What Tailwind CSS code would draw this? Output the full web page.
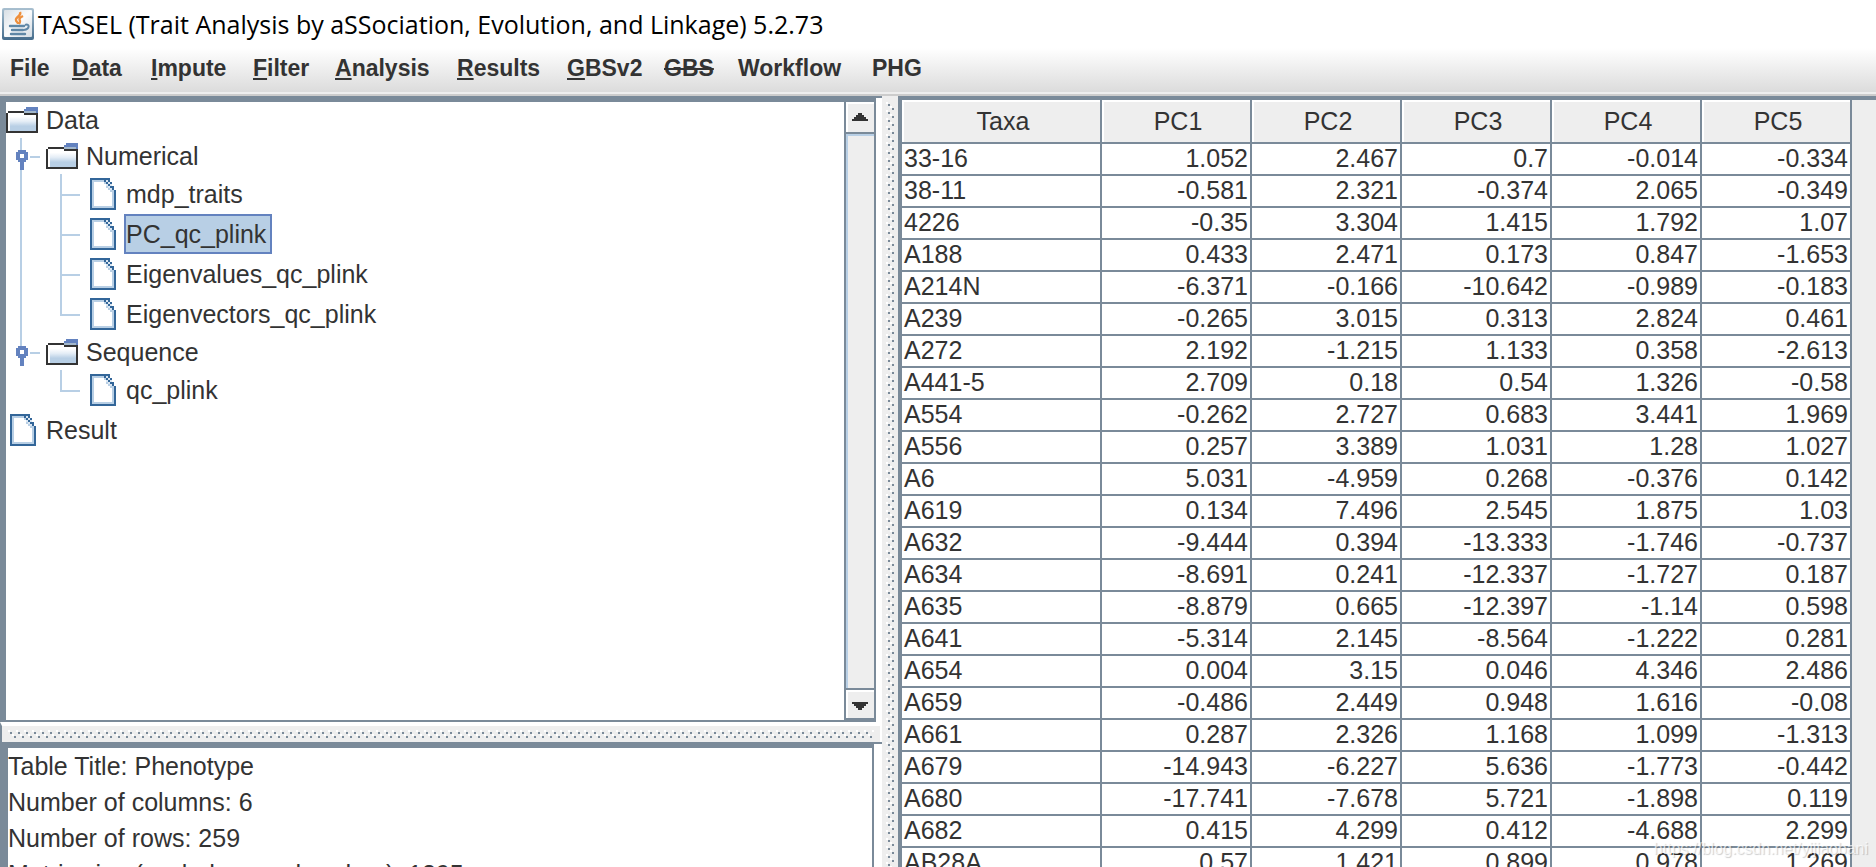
<!DOCTYPE html>
<html lang="en">
<head>
    <meta charset="UTF-8">
    <meta name="viewport" content="width=device-width, initial-scale=1.0">
    <title>TASSEL (Trait Analysis by aSSociation, Evolution, and Linkage) 5.2.73</title>
    <script src="https://cdn.jsdelivr.net/npm/@tailwindcss/browser@4"></script>
</head>
<body class="h-screen flex flex-col overflow-hidden bg-white font-['Liberation_Sans',Arial,sans-serif] text-[25px] leading-7 text-[#333333]">

    <!-- shared icons -->
    <svg class="absolute w-0 h-0" aria-hidden="true">
        <defs>
            <linearGradient id="folder-fill" x1="0" y1="0" x2="0" y2="1">
                <stop offset="0.1" stop-color="#ffffff"/>
                <stop offset="0.4" stop-color="#e4edf6"/>
                <stop offset="0.7" stop-color="#b8cfe5"/>
            </linearGradient>
        </defs>
        <symbol id="folder" viewBox="0 0 16 13" shape-rendering="crispEdges">
            <path d="M1 3h14v9H1z" fill="#fff"/>
            <path d="M2 4h13v8H2z" fill="url(#folder-fill)"/>
            <path d="M1 2h8v1H1zM0 3h1v9h14V4H9V3h7v10H0z" fill="#333"/>
            <path d="M10 0h6v2h-1v1h1v-1H9V1h1z" fill="#6382bf"/>
            <path d="M9 2h6v1H9z" fill="#a3b8cc"/>
        </symbol>
        <symbol id="file" viewBox="0 0 13 16" shape-rendering="crispEdges">
            <path d="M0 0h10v2h1v2h1v2h1v10H0z" fill="#336699"/>
            <path d="M1 1h6v1h1v2h1v1h1v1h2v9H1z" fill="#b8cfe5"/>
            <path d="M2 2h5v1h1v2h1v1h1v1h1v7H2z" fill="#fff"/>
            <path d="M8 1h1v1H8zM9 2h1v1H9zM8 3h1v1H8zM9 4h1v1H9zM10 3h1v1h-1zM10 5h1v1h-1z" fill="#dbe7f2"/>
        </symbol>
        <symbol id="handle" viewBox="0 0 6 10" shape-rendering="crispEdges">
            <path d="M1 0h4v1h1v4H5v1H4v4H2V6H1V5H0V1h1z" fill="#6382bf"/>
            <path d="M2 2h2v2H2z" fill="#fff"/>
        </symbol>
        <symbol id="arrow-up" viewBox="0 0 8 4" shape-rendering="crispEdges">
            <path d="M3 0h2v1h1v1h1v1h1v1H0V3h1V2h1V1h1z" fill="#333"/>
        </symbol>
        <symbol id="arrow-down" viewBox="0 0 8 4" shape-rendering="crispEdges">
            <path d="M0 0h8v1H7v1H6v1H5v1H3V3H2V2H1V1H0z" fill="#333"/>
        </symbol>
    </svg>

    <header class="flex h-12 shrink-0 items-center pl-0.5 gap-1 text-black">
        <svg class="w-8 h-8" viewBox="0 0 32 32" aria-hidden="true">
            <defs>
                <linearGradient id="java-bg" x1="0" y1="0" x2="0" y2="1">
                    <stop offset="0" stop-color="#a9c0d0"/>
                    <stop offset="1" stop-color="#456c8c"/>
                </linearGradient>
                <linearGradient id="java-in" x1="0" y1="0" x2="1" y2="1">
                    <stop offset="0" stop-color="#d8dfe5"/>
                    <stop offset="0.5" stop-color="#fafbfc"/>
                    <stop offset="1" stop-color="#d5dde4"/>
                </linearGradient>
            </defs>
            <rect width="32" height="32" rx="2" fill="url(#java-bg)"/>
            <rect x="2" y="2" width="28" height="27" rx="1" fill="url(#java-in)"/>
            <path d="M18 4c2 4-5 5-4 8 0 2 2 2 2 4M21 8c-4 2-4 3-3 5 0 1 0 2-1 3" fill="none" stroke="#ee8f3c" stroke-width="2.4"/>
            <path d="M8 18h14M10 22h11M9 26h14" fill="none" stroke="#5f87a6" stroke-width="2.4" stroke-linecap="round"/>
            <path d="M23 17c5-2 5 4-1 5" fill="none" stroke="#5f87a6" stroke-width="2"/>
        </svg>
        <h1 class="font-['Open_Sans',sans-serif] text-[25px] leading-8 whitespace-nowrap">TASSEL (Trait Analysis by aSSociation, Evolution, and Linkage) 5.2.73</h1>
    </header>

    <nav class="grid h-12 shrink-0 grid-cols-[62px_79px_102px_82px_122px_110px_97px_74px_134px_auto] content-start justify-start justify-items-start border-b-2 border-[#cccccc] bg-linear-to-b from-white to-[#dadada] pl-2.5 pt-1.5 text-[23px] font-bold shadow-[inset_0_-2px_0_#eeeeee]">
        <button>File</button>
        <button><span class="underline decoration-2 underline-offset-2">D</span>ata</button>
        <button><span class="underline decoration-2 underline-offset-2">I</span>mpute</button>
        <button><span class="underline decoration-2 underline-offset-2">F</span>ilter</button>
        <button><span class="underline decoration-2 underline-offset-2">A</span>nalysis</button>
        <button><span class="underline decoration-2 underline-offset-2">R</span>esults</button>
        <button><span class="underline decoration-2 underline-offset-2">G</span>BSv2</button>
        <button class="line-through decoration-2">GBS</button>
        <button>Workflow</button>
        <button>PHG</button>
    </nav>

    <main class="flex flex-1 min-h-0">
        <div class="flex flex-col w-[882px] shrink-0">

            <!-- data tree -->
            <section class="flex flex-1 min-h-0 border-l-6 border-t-6 border-[#7a8a99] bg-white">
                <div class="flex-1 border-b-2 border-[#7a8a99]">
                    <ul>
                        <li>
                            <div class="flex h-9 items-center gap-2"><svg class="w-8 h-[26px]"><use href="#folder"/></svg>Data</div>
                            <ul class="relative pl-10">
                                <li class="absolute left-3.5 top-0 h-[210px] w-0.5 bg-[#b8cfe5]" aria-hidden="true"></li>
                                <li class="relative">
                                    <div class="absolute -left-4 top-[18px] h-0.5 w-2.5 bg-[#b8cfe5]"></div>
                                    <svg class="absolute -left-[30px] top-3 w-3 h-5"><use href="#handle"/></svg>
                                    <div class="flex h-9 items-center gap-2"><svg class="w-8 h-[26px]"><use href="#folder"/></svg>Numerical</div>
                                    <ul class="relative pl-10">
                                        <li class="absolute left-3.5 top-0 h-[142px] w-0.5 bg-[#b8cfe5]" aria-hidden="true"></li>
                                        <li class="relative flex h-10 items-center gap-2 before:absolute before:-left-6 before:top-5 before:h-0.5 before:w-[18px] before:bg-[#b8cfe5]"><svg class="ml-1 mr-0.5 w-[26px] h-8"><use href="#file"/></svg>mdp_traits</li>
                                        <li class="relative flex h-10 items-center gap-1.5 before:absolute before:-left-6 before:top-5 before:h-0.5 before:w-[18px] before:bg-[#b8cfe5]"><svg class="ml-1 mr-0.5 w-[26px] h-8"><use href="#file"/></svg><span class="flex h-10 items-center border-2 border-[#6382bf] bg-[#b8cfe5] pr-1">PC_qc_plink</span></li>
                                        <li class="relative flex h-10 items-center gap-2 before:absolute before:-left-6 before:top-5 before:h-0.5 before:w-[18px] before:bg-[#b8cfe5]"><svg class="ml-1 mr-0.5 w-[26px] h-8"><use href="#file"/></svg>Eigenvalues_qc_plink</li>
                                        <li class="relative flex h-10 items-center gap-2 before:absolute before:-left-6 before:top-5 before:h-0.5 before:w-[18px] before:bg-[#b8cfe5]"><svg class="ml-1 mr-0.5 w-[26px] h-8"><use href="#file"/></svg>Eigenvectors_qc_plink</li>
                                    </ul>
                                </li>
                                <li class="relative">
                                    <div class="absolute -left-4 top-[18px] h-0.5 w-2.5 bg-[#b8cfe5]"></div>
                                    <svg class="absolute -left-[30px] top-3 w-3 h-5"><use href="#handle"/></svg>
                                    <div class="flex h-9 items-center gap-2"><svg class="w-8 h-[26px]"><use href="#folder"/></svg>Sequence</div>
                                    <ul class="relative pl-10">
                                        <li class="absolute left-3.5 top-0 h-[22px] w-0.5 bg-[#b8cfe5]" aria-hidden="true"></li>
                                        <li class="relative flex h-10 items-center gap-2 before:absolute before:-left-6 before:top-5 before:h-0.5 before:w-[18px] before:bg-[#b8cfe5]"><svg class="ml-1 mr-0.5 w-[26px] h-8"><use href="#file"/></svg>qc_plink</li>
                                    </ul>
                                </li>
                            </ul>
                        </li>
                        <li class="flex h-10 items-center gap-2"><svg class="ml-1 mr-0.5 w-[26px] h-8"><use href="#file"/></svg>Result</li>
                    </ul>
                </div>
                <div class="flex flex-col w-8 border-x-2 border-b-2 border-[#7a8a99] bg-[#eeeeee]">
                    <button aria-label="Scroll up" class="flex h-8 items-center justify-center border-b-2 border-b-[#7a8a99] shadow-[inset_2px_2px_0_#ffffff]"><svg class="w-4 h-2"><use href="#arrow-up"/></svg></button>
                    <div class="flex-1 border-l-2 border-t-2 border-[#b8cfe5]"></div>
                    <button aria-label="Scroll down" class="flex h-8 items-center justify-center border-y-2 border-[#7a8a99] pt-1 shadow-[inset_2px_2px_0_#ffffff]"><svg class="w-4 h-2"><use href="#arrow-down"/></svg></button>
                </div>
                <div class="-mt-1 w-1.5 bg-white"></div>
            </section>

            <!-- horizontal divider -->
            <div class="h-5 border-t-4 border-l-2 border-r-2 border-y-white border-r-white border-l-[#7a8a99] bg-[#eeeeee] pt-1 px-1.5">
                <svg class="w-full h-2" shape-rendering="crispEdges" aria-hidden="true">
                    <defs>
                        <pattern id="bumps-h" width="8" height="8" patternUnits="userSpaceOnUse">
                            <path d="M0 0h2v2H0zM4 4h2v2H4z" fill="#fff"/>
                            <path d="M2 2h2v2H2zM6 6h2v2H6z" fill="#7a8a99"/>
                        </pattern>
                    </defs>
                    <rect width="100%" height="8" fill="url(#bumps-h)"/>
                </svg>
            </div>

            <!-- info pane -->
            <section class="flex h-[125px] border-l-8 border-t-6 border-[#7a8a99] bg-white">
                <textarea readonly aria-label="Data information" class="flex-1 resize-none overflow-hidden border-r-2 border-[#7a8a99] leading-9 outline-none">Table Title: Phenotype
Number of columns: 6
Number of rows: 259
Matrix size (excludes row headers): 1295</textarea>
                <div class="-mt-1 w-2 bg-white"></div>
            </section>
        </div>

        <!-- vertical divider -->
        <div class="w-4 shrink-0 bg-[#eeeeee] pt-1.5 pl-1">
            <svg class="w-2 h-full" shape-rendering="crispEdges" aria-hidden="true">
                <defs>
                    <pattern id="bumps-v" width="8" height="8" patternUnits="userSpaceOnUse">
                        <path d="M0 0h2v2H0zM4 4h2v2H4z" fill="#fff"/>
                        <path d="M2 2h2v2H2zM6 6h2v2H6z" fill="#7a8a99"/>
                    </pattern>
                </defs>
                <rect width="8" height="100%" fill="url(#bumps-v)"/>
            </svg>
        </div>

        <!-- table -->
        <section class="relative flex-1 overflow-hidden border-l-4 border-t-4 border-[#7a8a99] bg-[#eeeeee]">
            <table class="w-[950px] table-fixed border-separate border-spacing-0 bg-white">
                <thead>
                    <tr class="h-11 [&>th]:border-b-2 [&>th]:border-r-2 [&>th]:border-[#7a8a99] [&>th]:bg-[#eeeeee] [&>th]:p-0 [&>th]:pl-1 [&>th]:font-normal [&>th]:shadow-[inset_2px_2px_0_#ffffff]">
                        <th class="w-[200px]">Taxa</th>
                        <th class="w-[150px]">PC1</th>
                        <th class="w-[150px]">PC2</th>
                        <th class="w-[150px]">PC3</th>
                        <th class="w-[150px]">PC4</th>
                        <th class="w-[150px]">PC5</th>
                    </tr>
                </thead>
                <tbody id="rows" class="[&_td]:border-b-2 [&_td]:border-r-2 [&_td]:border-[#7a8a99] [&_td]:px-0.5 [&_td]:pt-0 [&_td]:pb-0.5 [&_td]:text-right [&_td:first-child]:text-left"></tbody>
            </table>
            <div class="absolute right-2 bottom-1.5 text-base leading-6 text-white/70 [text-shadow:1px_1px_1px_rgba(0,0,0,0.2)]">https://blog.csdn.net/yijiaobani</div>
        </section>
    </main>

    <script>
        const data = [
            ['33-16', '1.052', '2.467', '0.7', '-0.014', '-0.334'],
            ['38-11', '-0.581', '2.321', '-0.374', '2.065', '-0.349'],
            ['4226', '-0.35', '3.304', '1.415', '1.792', '1.07'],
            ['A188', '0.433', '2.471', '0.173', '0.847', '-1.653'],
            ['A214N', '-6.371', '-0.166', '-10.642', '-0.989', '-0.183'],
            ['A239', '-0.265', '3.015', '0.313', '2.824', '0.461'],
            ['A272', '2.192', '-1.215', '1.133', '0.358', '-2.613'],
            ['A441-5', '2.709', '0.18', '0.54', '1.326', '-0.58'],
            ['A554', '-0.262', '2.727', '0.683', '3.441', '1.969'],
            ['A556', '0.257', '3.389', '1.031', '1.28', '1.027'],
            ['A6', '5.031', '-4.959', '0.268', '-0.376', '0.142'],
            ['A619', '0.134', '7.496', '2.545', '1.875', '1.03'],
            ['A632', '-9.444', '0.394', '-13.333', '-1.746', '-0.737'],
            ['A634', '-8.691', '0.241', '-12.337', '-1.727', '0.187'],
            ['A635', '-8.879', '0.665', '-12.397', '-1.14', '0.598'],
            ['A641', '-5.314', '2.145', '-8.564', '-1.222', '0.281'],
            ['A654', '0.004', '3.15', '0.046', '4.346', '2.486'],
            ['A659', '-0.486', '2.449', '0.948', '1.616', '-0.08'],
            ['A661', '0.287', '2.326', '1.168', '1.099', '-1.313'],
            ['A679', '-14.943', '-6.227', '5.636', '-1.773', '-0.442'],
            ['A680', '-17.741', '-7.678', '5.721', '-1.898', '0.119'],
            ['A682', '0.415', '4.299', '0.412', '-4.688', '2.299'],
            ['AB28A', '0.57', '1.421', '0.899', '0.978', '1.269']
        ];

        const tbody = document.getElementById('rows');
        data.forEach(function(row) {
            const tr = tbody.insertRow();
            row.forEach(function(value) {
                tr.insertCell().textContent = value;
            });
        });
    </script>
</body>
</html>
